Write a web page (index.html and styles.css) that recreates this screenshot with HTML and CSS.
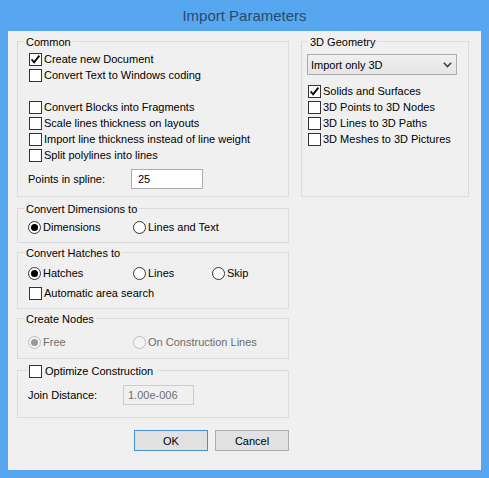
FILE: index.html
```html
<!DOCTYPE html>
<html>
<head>
<meta charset="utf-8">
<link rel="stylesheet" href="styles.css">
</head>
<body>
<div class="window">
  <div class="titlebar">Import Parameters</div>
  <div class="client">
    <div class="top-row">
      <div class="group common">
        <span class="gt">Common</span>
        <div class="rows">
          <label class="row"><span class="check on"><svg viewBox="0 0 11 11" width="11" height="11"><path d="M1.6 5.4 L4.1 8.4 L9.4 1.6" fill="none" stroke="#000" stroke-width="1.8"/></svg></span>Create new Document</label>
          <label class="row"><span class="check"></span>Convert Text to Windows coding</label>
          <div class="row"></div>
          <label class="row"><span class="check"></span>Convert Blocks into Fragments</label>
          <label class="row"><span class="check"></span>Scale lines thickness on layouts</label>
          <label class="row"><span class="check"></span><span class="nowrap">Import line thickness instead of line weight</span></label>
          <label class="row"><span class="check"></span>Split polylines into lines</label>
        </div>
        <div class="field-row points">
          <span class="flabel w103">Points in spline:</span>
          <span class="input">25</span>
        </div>
      </div>
      <div class="group geo">
        <span class="gt">3D Geometry</span>
        <div class="select"><span>Import only 3D</span><svg width="9" height="6" viewBox="0 0 9 6"><path d="M0.8 0.8 L4.5 4.6 L8.2 0.8" fill="none" stroke="#404040" stroke-width="1.6"/></svg></div>
        <div class="rows geo-rows">
          <label class="row r-geo"><span class="check on"><svg viewBox="0 0 11 11" width="11" height="11"><path d="M1.6 5.4 L4.1 8.4 L9.4 1.6" fill="none" stroke="#000" stroke-width="1.8"/></svg></span>Solids and Surfaces</label>
          <label class="row r-geo"><span class="check"></span>3D Points to 3D Nodes</label>
          <label class="row r-geo"><span class="check"></span>3D Lines to 3D Paths</label>
          <label class="row r-geo"><span class="check"></span>3D Meshes to 3D Pictures</label>
        </div>
      </div>
    </div>

    <div class="group dims">
      <span class="gt">Convert Dimensions to</span>
      <div class="row radio-row r-first">
        <span class="opt w105"><span class="radio on"></span>Dimensions</span>
        <span class="opt"><span class="radio"></span>Lines and Text</span>
      </div>
    </div>

    <div class="group hatches">
      <span class="gt">Convert Hatches to</span>
      <div class="row radio-row r-hatch">
        <span class="opt w105"><span class="radio on"></span>Hatches</span>
        <span class="opt w79"><span class="radio"></span>Lines</span>
        <span class="opt"><span class="radio"></span>Skip</span>
      </div>
      <label class="row r-auto"><span class="check"></span>Automatic area search</label>
    </div>

    <div class="group nodes">
      <span class="gt">Create Nodes</span>
      <div class="row radio-row r-nodes disabled">
        <span class="opt w105"><span class="radio on"></span>Free</span>
        <span class="opt"><span class="radio"></span>On Construction Lines</span>
      </div>
    </div>

    <div class="group optimize">
      <label class="gt gt-check"><span class="check"></span>Optimize Construction</label>
      <div class="field-row join">
        <span class="flabel w95">Join Distance:</span>
        <span class="input disabled-input">1.00e-006</span>
      </div>
    </div>

    <div class="buttons">
      <button class="btn default">OK</button>
      <button class="btn">Cancel</button>
    </div>
  </div>
</div>
</body>
</html>
```
FILE: styles.css
```css
html, body {
  margin: 0;
  padding: 0;
}
body {
  font-family: "Liberation Sans", Arial, sans-serif;
  font-size: 11px;
  color: #000;
}
.window {
  width: 489px;
  height: 478px;
  background: #56a7f0;
  display: flex;
  flex-direction: column;
}
.titlebar {
  height: 31px;
  display: flex;
  align-items: center;
  justify-content: center;
  font-size: 15px;
  color: #2a4a6c;
}
.client {
  margin: 0 8px 8px 8px;
  flex: 1;
  background: #f0f0f0;
  padding: 10px 0 0 9px;
  box-sizing: border-box;
}
.top-row {
  display: flex;
  gap: 12px;
  align-items: stretch;
}
.group {
  border: 1px solid #dcdcdc;
  box-sizing: border-box;
  display: flex;
  flex-direction: column;
  width: 272px;
}
.geo {
  width: 168px;
}
.gt {
  align-self: flex-start;
  margin: -7px 0 0 6px;
  padding: 0 2px;
  height: 14px;
  line-height: 14px;
  background: #f0f0f0;
  white-space: nowrap;
}
.rows {
  margin-top: 2px;
  display: flex;
  flex-direction: column;
}
.row {
  height: 16px;
  display: flex;
  align-items: center;
  padding-left: 10px;
  white-space: nowrap;
}
.nowrap {
  white-space: nowrap;
}
.check {
  width: 13px;
  height: 13px;
  box-sizing: border-box;
  border: 1px solid #333;
  background: #fff;
  margin: 0 2px 0 1px;
  flex: none;
  display: flex;
  align-items: center;
  justify-content: center;
}
.check svg {
  display: block;
}
.radio {
  width: 13px;
  height: 13px;
  box-sizing: border-box;
  border: 1px solid #333;
  border-radius: 50%;
  background: #fff;
  margin-right: 2px;
  flex: none;
  display: flex;
  align-items: center;
  justify-content: center;
}
.radio.on::after {
  content: "";
  width: 7px;
  height: 7px;
  border-radius: 50%;
  background: #000;
}
.opt {
  display: flex;
  align-items: center;
  white-space: nowrap;
}
.w105 { width: 105px; }
.w79 { width: 79px; }

.field-row {
  display: flex;
  align-items: center;
  padding-left: 10px;
  height: 20px;
}
.points {
  margin-top: 6px;
  margin-bottom: 7px;
}
.flabel { flex: none; }
.w103 { width: 103px; }
.w95 { width: 95px; }
.input {
  box-sizing: border-box;
  width: 72px;
  height: 20px;
  border: 1px solid #abadb3;
  background: #fff;
  display: flex;
  align-items: center;
  padding-left: 6px;
}
.disabled-input {
  width: 71px;
  border-color: #cccccc;
  background: #f0f0f0;
  color: #6d6d6d;
  padding-left: 4px;
}

/* 3D geometry */
.select {
  box-sizing: border-box;
  width: 150px;
  height: 21px;
  margin: 5px 0 0 5px;
  border: 1px solid #acacac;
  background: linear-gradient(#f0f0f0, #e5e5e5);
  display: flex;
  align-items: center;
  justify-content: space-between;
  padding: 0 4px 0 3px;
}
.select svg { display: block; }
.geo-rows {
  margin-top: 8px;
}
.r-geo {
  padding-left: 5px;
}

/* lower groups */
.dims {
  margin-top: 11px;
  padding-bottom: 7px;
}
.r-first { margin-top: 3px; }
.hatches {
  margin-top: 9px;
  padding-bottom: 7px;
}
.r-hatch { margin-top: 5px; }
.r-auto { margin-top: 4px; }
.nodes {
  margin-top: 9px;
  padding-bottom: 8px;
}
.r-nodes { margin-top: 8px; }
.disabled { color: #6d6d6d; }
.disabled .radio {
  border-color: #bcbcbc;
  background: #f4f4f4;
}
.disabled .radio.on::after {
  background: #9a9a9a;
}
.optimize {
  margin-top: 11px;
  padding-bottom: 12px;
}
.gt-check {
  display: flex;
  align-items: center;
  margin-left: 9px;
  padding: 0 4px 0 2px;
}
.gt-check .check {
  margin-left: 0;
  margin-right: 3px;
}
.join { margin-top: 7px; }

.buttons {
  width: 272px;
  display: flex;
  justify-content: flex-end;
  gap: 7px;
  margin-top: 12px;
}
.btn {
  box-sizing: border-box;
  width: 74px;
  height: 21px;
  border: 1px solid #adadad;
  background: #e1e1e1;
  font-family: "Liberation Sans", Arial, sans-serif;
  font-size: 11px;
  color: #000;
  padding: 0;
  margin: 0;
}
.btn.default {
  border-color: #4a90d6;
}
```
